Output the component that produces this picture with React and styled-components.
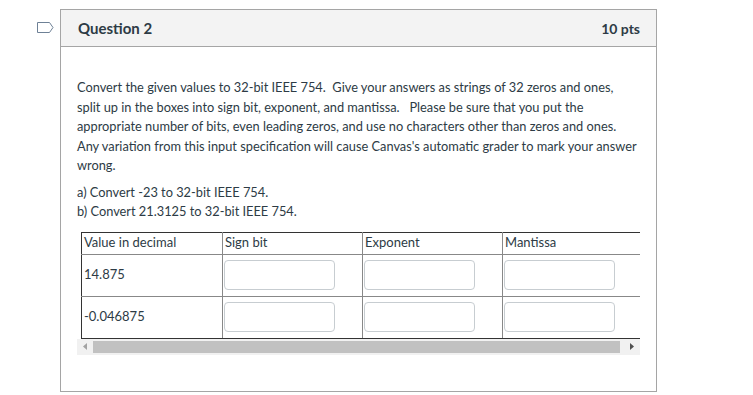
import React from 'react';
import styled, { createGlobalStyle } from 'styled-components';

const GlobalStyle = createGlobalStyle`
  body {
    margin: 0;
    background: #fff;
    font-family: Lato, "Open Sans", sans-serif;
    color: #2d3b45;
  }
`;

const Page = styled.div`
  display: flex;
  align-items: flex-start;
  gap: 6px;
  padding: 9px 0 0 37px;
`;

const Flag = styled.svg`
  width: 17px;
  height: 11px;
  margin-top: 13px;
  flex-shrink: 0;
`;

const Card = styled.div`
  width: 595px;
  border: 1px solid #a5a5a5;
  background: #fff;
`;

const Header = styled.div`
  display: flex;
  justify-content: space-between;
  align-items: center;
  height: 36px;
  padding: 0 16px 0 17px;
  background: #f3f3f3;
  border-bottom: 1px solid #a5a5a5;
`;

const Title = styled.span`
  font-size: 15px;
  font-weight: 700;
  color: #2d3b45;
`;

const Points = styled.span`
  font-size: 14px;
  font-weight: 700;
  color: #2d3b45;
`;

const Body = styled.div`
  padding: 31px 16px 36px 16px;
  font-size: 12.8px;
  line-height: 19.5px;
`;

const Para = styled.p`
  margin: 0 0 ${p => p.$gap || 0}px 0;
`;

const ScrollArea = styled.div`
  width: 563px;
`;

const TableClip = styled.div`
  overflow: hidden;
  padding-left: 4px;
`;

const Table = styled.table`
  border-collapse: collapse;
  table-layout: fixed;
  width: 600px;
  border: 1px solid #333;
  font-size: 13px;
`;

const Th = styled.td`
  width: ${p => p.$w}px;
  height: 21px;
  padding: 0 2px;
  border: 1px solid #888;
  border-top-color: #333;
  ${p => p.$first && 'border-left-color: #333;'}
  text-align: left;
  vertical-align: middle;
`;

const Td = styled.td`
  height: 41px;
  padding: 0 1px;
  border: 1px solid #888;
  ${p => p.$first && 'border-left-color: #333; padding: 0 2px;'}
  ${p => p.$last && 'border-bottom-color: #333;'}
  vertical-align: middle;
`;

const Field = styled.input`
  display: block;
  box-sizing: border-box;
  width: 111px;
  height: 30px;
  border: 1px solid #c7cdd1;
  border-radius: 4px;
  background: #fff;
  margin: 0;
`;

const Track = styled.div`
  display: flex;
  align-items: center;
  height: 16px;
  background: #f1f1f1;
`;

const Arrow = styled.div`
  width: 16px;
  height: 16px;
  display: flex;
  align-items: center;
  justify-content: center;
  flex-shrink: 0;
`;

const Thumb = styled.div`
  flex: 1;
  height: 12px;
  margin: 0 4px 0 0;
  background: #c1c1c1;
`;

const cols = [
  { label: 'Value in decimal', w: 136 },
  { label: 'Sign bit', w: 135 },
  { label: 'Exponent', w: 135 },
  { label: 'Mantissa', w: 178 },
];

const rows = ['14.875', '-0.046875'];

export default function App() {
  return (
    <>
      <GlobalStyle />
      <Page>
        <Flag viewBox="0 0 17 11">
          <path d="M0.5 0.5 H12.5 L16 5.5 L12.5 10.5 H0.5 Z" fill="none" stroke="#6e8196" strokeWidth="1" />
        </Flag>
        <Card>
          <Header>
            <Title>Question 2</Title>
            <Points>10 pts</Points>
          </Header>
          <Body>
            <Para $gap={7}>
              Convert the given values to 32-bit IEEE 754.&nbsp; Give your answers as strings of 32 zeros and ones,
              split up in the boxes into sign bit, exponent, and mantissa.&nbsp;&nbsp; Please be sure that you put the
              appropriate number of bits, even leading zeros, and use no characters other than zeros and ones.&nbsp;
              Any variation from this input specification will cause Canvas's automatic grader to mark your answer
              wrong.
            </Para>
            <Para>a) Convert -23 to 32-bit IEEE 754.</Para>
            <Para $gap={10}>b) Convert 21.3125 to 32-bit IEEE 754.</Para>
            <ScrollArea>
              <TableClip>
                <Table>
                  <tbody>
                    <tr>
                      {cols.map((c, i) => (
                        <Th key={c.label} $w={c.w} $first={i === 0}>{c.label}</Th>
                      ))}
                    </tr>
                    {rows.map((r, ri) => (
                      <tr key={r}>
                        <Td $first $last={ri === rows.length - 1}>{r}</Td>
                        {[0, 1, 2].map(k => (
                          <Td key={k} $last={ri === rows.length - 1}><Field type="text" /></Td>
                        ))}
                      </tr>
                    ))}
                  </tbody>
                </Table>
              </TableClip>
              <Track>
                <Arrow>
                  <svg width="4" height="7" viewBox="0 0 4 7"><path d="M4 0 L0 3.5 L4 7 Z" fill="#a3a3a3" /></svg>
                </Arrow>
                <Thumb />
                <Arrow>
                  <svg width="4" height="7" viewBox="0 0 4 7"><path d="M0 0 L4 3.5 L0 7 Z" fill="#505050" /></svg>
                </Arrow>
              </Track>
            </ScrollArea>
          </Body>
        </Card>
      </Page>
    </>
  );
}
